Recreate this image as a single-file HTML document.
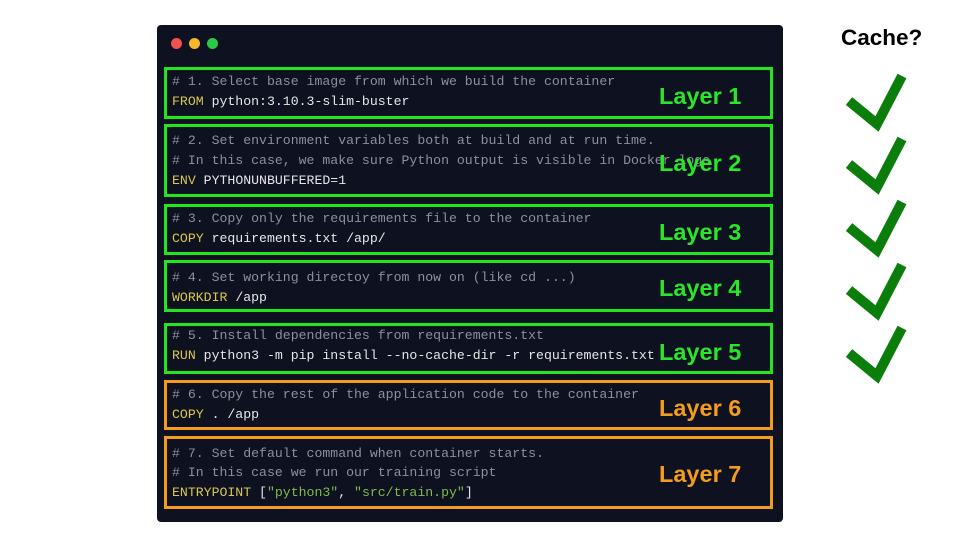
<!DOCTYPE html>
<html><head><meta charset="utf-8"><style>
body{margin:0;width:960px;height:540px;background:#fff;position:relative;overflow:hidden;font-family:"Liberation Sans",sans-serif}
.panel{position:absolute;left:157px;top:25px;width:626px;height:497px;background:#0e1120;border-radius:4px}
.dot{position:absolute;top:38px;width:11px;height:11px;border-radius:50%}
.box{position:absolute;left:164px;width:603px;border:3px solid #22e41f;box-sizing:content-box}
.o{border-color:#f39c1e}
.l{position:absolute;left:172px;height:20px;line-height:20px;font-family:"Liberation Mono",monospace;font-size:13.2px;color:#e6e6e6;white-space:pre}
.c{color:#8c909b}.k{color:#d9c84a}.s{color:#7fbb4a}
.lab{position:absolute;left:659px;font-weight:bold;font-size:23.5px;height:26px;line-height:26px;color:#2ae52a}
.lo{color:#f39c1e}
.cache{position:absolute;left:841px;top:25px;font-weight:bold;font-size:22.5px;color:#000}
svg.ck{position:absolute;left:840px;width:70px;height:70px}
</style></head><body>
<div class="panel"></div>
<div class="dot" style="left:171px;background:#f0524f"></div>
<div class="dot" style="left:189px;background:#f5b82a"></div>
<div class="dot" style="left:207px;background:#2ec847"></div>

<div class="box" style="top:67px;height:46px"></div>
<div class="box" style="top:124px;height:67px"></div>
<div class="box" style="top:204px;height:45px"></div>
<div class="box" style="top:260px;height:46px"></div>
<div class="box" style="top:323px;height:45px"></div>
<div class="box o" style="top:380px;height:44px"></div>
<div class="box o" style="top:436px;height:67px"></div>

<div class="l c" style="top:72px"># 1. Select base image from which we build the container</div>
<div class="l" style="top:92px"><span class="k">FROM</span> python:3.10.3-slim-buster</div>
<div class="l c" style="top:131px"># 2. Set environment variables both at build and at run time.</div>
<div class="l c" style="top:151px"># In this case, we make sure Python output is visible in Docker logs</div>
<div class="l" style="top:171px"><span class="k">ENV</span> PYTHONUNBUFFERED=1</div>
<div class="l c" style="top:209px"># 3. Copy only the requirements file to the container</div>
<div class="l" style="top:229px"><span class="k">COPY</span> requirements.txt /app/</div>
<div class="l c" style="top:268px"># 4. Set working directoy from now on (like cd ...)</div>
<div class="l" style="top:288px"><span class="k">WORKDIR</span> /app</div>
<div class="l c" style="top:326px"># 5. Install dependencies from requirements.txt</div>
<div class="l" style="top:346px"><span class="k">RUN</span> python3 -m pip install --no-cache-dir -r requirements.txt</div>
<div class="l c" style="top:385px"># 6. Copy the rest of the application code to the container</div>
<div class="l" style="top:405px"><span class="k">COPY</span> . /app</div>
<div class="l c" style="top:444px"># 7. Set default command when container starts.</div>
<div class="l c" style="top:463px"># In this case we run our training script</div>
<div class="l" style="top:483px"><span class="k">ENTRYPOINT</span> [<span class="s">"python3"</span>, <span class="s">"src/train.py"</span>]</div>

<div class="lab" style="top:83px">Layer 1</div>
<div class="lab" style="top:150px">Layer 2</div>
<div class="lab" style="top:219px">Layer 3</div>
<div class="lab" style="top:275px">Layer 4</div>
<div class="lab" style="top:339px">Layer 5</div>
<div class="lab lo" style="top:395px">Layer 6</div>
<div class="lab lo" style="top:461px">Layer 7</div>

<div class="cache">Cache?</div>
<svg class="ck" style="top:66px" viewBox="0 0 70 70"><polyline points="9,35 37,58 62,10" fill="none" stroke="#0b7d0b" stroke-width="10"/></svg>
<svg class="ck" style="top:129px" viewBox="0 0 70 70"><polyline points="9,35 37,58 62,10" fill="none" stroke="#0b7d0b" stroke-width="10"/></svg>
<svg class="ck" style="top:192px" viewBox="0 0 70 70"><polyline points="9,35 37,58 62,10" fill="none" stroke="#0b7d0b" stroke-width="10"/></svg>
<svg class="ck" style="top:255px" viewBox="0 0 70 70"><polyline points="9,35 37,58 62,10" fill="none" stroke="#0b7d0b" stroke-width="10"/></svg>
<svg class="ck" style="top:318px" viewBox="0 0 70 70"><polyline points="9,35 37,58 62,10" fill="none" stroke="#0b7d0b" stroke-width="10"/></svg>
</body></html>
